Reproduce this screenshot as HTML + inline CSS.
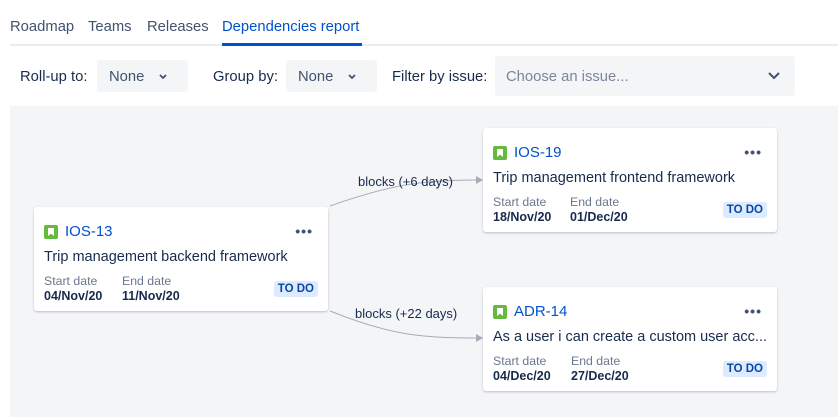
<!DOCTYPE html>
<html><head><style>
*{margin:0;padding:0;box-sizing:border-box}
body{width:838px;height:417px;overflow:hidden;background:#fff;font-family:"Liberation Sans",sans-serif;color:#172b4d;position:relative}
.a{position:absolute;white-space:nowrap}
.tab{font-size:14.8px;color:#42526e;top:19px}
.sel{position:absolute;background:#f4f5f7;border-radius:3px;font-size:14.8px;color:#42526e}
.lbl{font-size:14.8px;color:#172b4d;top:69px}
.card{position:absolute;width:294px;height:104px;background:#fff;border-radius:3px;box-shadow:0 1px 2px rgba(9,30,66,.25)}
.ic{position:absolute;left:10px;top:18px;width:14px;height:14px;background:#63ba3c;border-radius:2px}
.ic:after{content:"";position:absolute;left:4px;top:3px;width:6px;height:8px;background:#fff;clip-path:polygon(0 0,100% 0,100% 100%,50% 70%,0 100%)}
.id{position:absolute;left:31px;top:16px;font-size:15px;color:#0052cc}
.dots{position:absolute;right:15px;top:16px;font-size:14px;letter-spacing:1px;font-weight:bold;color:#42526e}
.tt{position:absolute;left:10px;top:42px;font-size:14.5px;color:#172b4d}
.sl{position:absolute;top:67px;font-size:12.3px;color:#6b778c}
.sv{position:absolute;top:82px;font-size:12.5px;font-weight:bold;color:#172b4d}
.bd{position:absolute;right:10px;top:74px;background:#deebff;color:#0747a6;font-size:11.5px;font-weight:bold;padding:2px 4px;border-radius:3px}
</style></head><body>
<div class="a tab" style="left:10px">Roadmap</div>
<div class="a tab" style="left:88px">Teams</div>
<div class="a tab" style="left:147px">Releases</div>
<div class="a tab" style="left:222px;color:#0052cc">Dependencies report</div>
<div class="a" style="left:10px;top:44px;width:828px;height:2px;background:#ebecf0"></div>
<div class="a" style="left:222px;top:43px;width:140px;height:3px;background:#0052cc"></div>
<div class="a lbl" style="left:20px">Roll-up to:</div>
<div class="sel" style="left:97px;top:60px;width:91px;height:32px"><span class="a" style="left:12px;top:9px">None</span>
<svg class="a" style="left:61px;top:13px" width="10" height="7"><path d="M2 2l3 3 3-3" stroke="#42526e" stroke-width="1.8" fill="none"/></svg></div>
<div class="a lbl" style="left:213px">Group by:</div>
<div class="sel" style="left:286px;top:60px;width:91px;height:32px"><span class="a" style="left:12px;top:9px">None</span>
<svg class="a" style="left:61px;top:13px" width="10" height="7"><path d="M2 2l3 3 3-3" stroke="#42526e" stroke-width="1.8" fill="none"/></svg></div>
<div class="a lbl" style="left:392px">Filter by issue:</div>
<div class="sel" style="left:495px;top:56px;width:300px;height:40px"><span class="a" style="left:11px;top:13px;color:#7a869a">Choose an issue...</span>
<svg class="a" style="left:272px;top:15px" width="14" height="10"><path d="M2 2l5 5 5-5" stroke="#42526e" stroke-width="2" fill="none"/></svg></div>
<div class="a" style="left:10px;top:106px;width:828px;height:311px;background:#f4f5f7"></div>
<svg class="a" style="left:0;top:0" width="838" height="417">
<path d="M330 206 C 390 185, 420 180, 478 180" stroke="#a5adba" fill="none"/>
<path d="M476 176 L483 180 L476 184Z" fill="#a5adba"/>
<path d="M330 311 C 390 335, 420 338, 478 338" stroke="#a5adba" fill="none"/>
<path d="M476 334 L483 338 L476 342Z" fill="#a5adba"/>
</svg>
<div class="a" style="left:358px;top:174px;font-size:13px">blocks (+6 days)</div>
<div class="a" style="left:355px;top:306px;font-size:13px">blocks (+22 days)</div>

<div class="card" style="left:34px;top:207px"><div class="ic"></div><div class="id">IOS-13</div><div class="dots">•••</div><div class="tt">Trip management backend framework</div>
<div class="sl" style="left:10px">Start date</div><div class="sl" style="left:88px">End date</div><div class="sv" style="left:10px">04/Nov/20</div><div class="sv" style="left:88px">11/Nov/20</div><div class="bd">TO DO</div></div>

<div class="card" style="left:483px;top:128px"><div class="ic"></div><div class="id">IOS-19</div><div class="dots">•••</div><div class="tt">Trip management frontend framework</div>
<div class="sl" style="left:10px">Start date</div><div class="sl" style="left:87px">End date</div><div class="sv" style="left:10px">18/Nov/20</div><div class="sv" style="left:87px">01/Dec/20</div><div class="bd">TO DO</div></div>

<div class="card" style="left:483px;top:287px"><div class="ic"></div><div class="id">ADR-14</div><div class="dots">•••</div><div class="tt">As a user i can create a custom user acc...</div>
<div class="sl" style="left:10px">Start date</div><div class="sl" style="left:88px">End date</div><div class="sv" style="left:10px">04/Dec/20</div><div class="sv" style="left:88px">27/Dec/20</div><div class="bd">TO DO</div></div>
</body></html>
